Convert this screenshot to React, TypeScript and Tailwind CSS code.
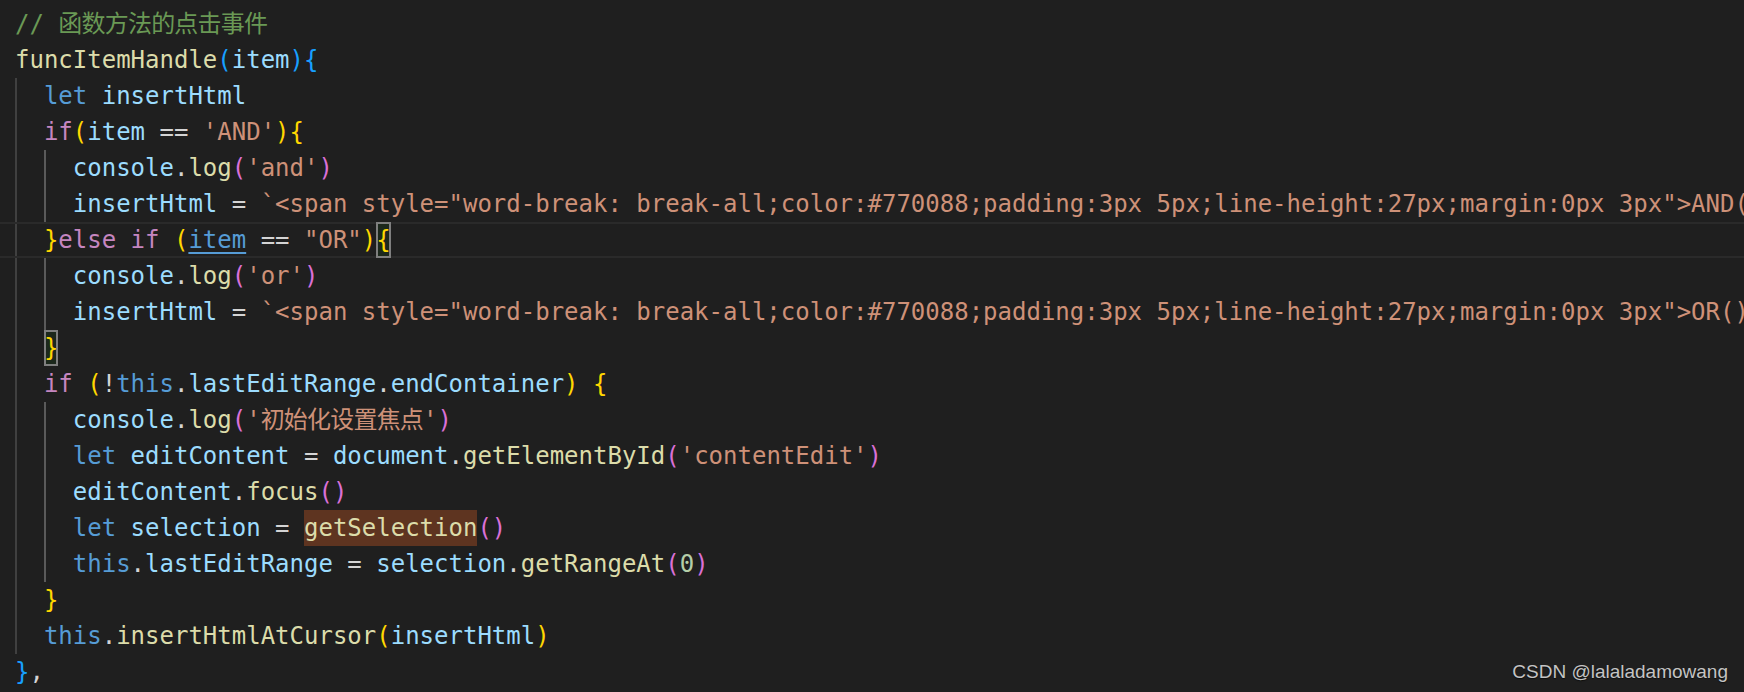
import React from "react";

const C = {
  cm: "text-[#6a9955]",
  fn: "text-[#dcdcaa]",
  vr: "text-[#9cdcfe]",
  kw: "text-[#569cd6]",
  ctl: "text-[#c586c0]",
  st: "text-[#ce9178]",
  op: "text-[#d4d4d4]",
  nm: "text-[#b5cea8]",
  b1: "text-[#ffd700]",
  b2: "text-[#da70d6]",
  b3: "text-[#179fff]",
};

function Guide({ active }: { active?: boolean }) {
  return (
    <span
      className={
        "self-stretch w-[28.9px] shrink-0 border-l-2 " +
        (active ? "border-[#5a5a5a]" : "border-[#404040]")
      }
    />
  );
}

function Line({
  indent,
  children,
  current,
}: {
  indent: number;
  children: React.ReactNode;
  current?: boolean;
}) {
  const guides = [];
  for (let i = 0; i < indent; i++) guides.push(<Guide key={i} active={i === 1} />);
  return (
    <div
      className={
        "flex h-[36px] items-center pl-[15px] whitespace-pre " +
        (current ? "border-y-2 border-[#2a2a2a]" : "")
      }
    >
      {guides}
      <span className="leading-[36px]">{children}</span>
    </div>
  );
}

const S = ({ c, t }: { c: string; t: string }) => <span className={c}>{t}</span>;
const CJK = ({ c, t }: { c: string; t: string }) => (
  <span className={c + " tracking-[-0.8px]"}>{t}</span>
);
const Box = ({ c, t }: { c: string; t: string }) => (
  <span
    className={
      c +
      " inline-block h-[36px] leading-[36px] align-top outline-2 outline-solid outline-[#7f7f7f] -outline-offset-2 bg-[#1c281c]"
    }
  >
    {t}
  </span>
);

export default function App() {
  return (
    <div
      className="relative w-[1744px] h-[692px] overflow-hidden bg-[#1f1f1f] pt-[6px] text-[24px] text-[#d4d4d4]"
      style={{ fontFamily: '"DejaVu Sans Mono", "Noto Sans CJK SC", monospace' }}
    >
      <Line indent={0}>
        <S c={C.cm} t="// " />
        <CJK c={C.cm} t="函数方法的点击事件" />
      </Line>
      <Line indent={0}>
        <S c={C.fn} t="funcItemHandle" />
        <S c={C.b3} t="(" />
        <S c={C.vr} t="item" />
        <S c={C.b3} t="){" />
      </Line>
      <Line indent={1}>
        <S c={C.kw} t="let " />
        <S c={C.vr} t="insertHtml" />
      </Line>
      <Line indent={1}>
        <S c={C.ctl} t="if" />
        <S c={C.b1} t="(" />
        <S c={C.vr} t="item" />
        <S c={C.op} t=" == " />
        <S c={C.st} t="'AND'" />
        <S c={C.b1} t="){" />
      </Line>
      <Line indent={2}>
        <S c={C.vr} t="console" />
        <S c={C.op} t="." />
        <S c={C.fn} t="log" />
        <S c={C.b2} t="(" />
        <S c={C.st} t="'and'" />
        <S c={C.b2} t=")" />
      </Line>
      <Line indent={2}>
        <S c={C.vr} t="insertHtml" />
        <S c={C.op} t=" = " />
        <S
          c={C.st}
          t={'`<span style="word-break: break-all;color:#770088;padding:3px 5px;line-height:27px;margin:0px 3px">AND()</span>`'}
        />
      </Line>
      <Line indent={1} current>
        <S c={C.b1} t="}" />
        <S c={C.ctl} t="else if " />
        <S c={C.b1} t="(" />
        <span className="text-[#569cd6] underline decoration-[#569cd6] decoration-2 underline-offset-[4px]">item</span>
        <S c={C.op} t=" == " />
        <S c={C.st} t={'"OR"'} />
        <S c={C.b1} t=")" />
        <Box c={C.b1} t="{" />
      </Line>
      <Line indent={2}>
        <S c={C.vr} t="console" />
        <S c={C.op} t="." />
        <S c={C.fn} t="log" />
        <S c={C.b2} t="(" />
        <S c={C.st} t="'or'" />
        <S c={C.b2} t=")" />
      </Line>
      <Line indent={2}>
        <S c={C.vr} t="insertHtml" />
        <S c={C.op} t=" = " />
        <S
          c={C.st}
          t={'`<span style="word-break: break-all;color:#770088;padding:3px 5px;line-height:27px;margin:0px 3px">OR()</span>`'}
        />
      </Line>
      <Line indent={1}>
        <Box c={C.b1} t="}" />
      </Line>
      <Line indent={1}>
        <S c={C.ctl} t="if " />
        <S c={C.b1} t="(" />
        <S c={C.op} t="!" />
        <S c={C.kw} t="this" />
        <S c={C.op} t="." />
        <S c={C.vr} t="lastEditRange" />
        <S c={C.op} t="." />
        <S c={C.vr} t="endContainer" />
        <S c={C.b1} t=")" />
        <S c={C.op} t=" " />
        <S c={C.b1} t="{" />
      </Line>
      <Line indent={2}>
        <S c={C.vr} t="console" />
        <S c={C.op} t="." />
        <S c={C.fn} t="log" />
        <S c={C.b2} t="(" />
        <S c={C.st} t="'" />
        <CJK c={C.st} t="初始化设置焦点" />
        <S c={C.st} t="'" />
        <S c={C.b2} t=")" />
      </Line>
      <Line indent={2}>
        <S c={C.kw} t="let " />
        <S c={C.vr} t="editContent" />
        <S c={C.op} t=" = " />
        <S c={C.vr} t="document" />
        <S c={C.op} t="." />
        <S c={C.fn} t="getElementById" />
        <S c={C.b2} t="(" />
        <S c={C.st} t="'contentEdit'" />
        <S c={C.b2} t=")" />
      </Line>
      <Line indent={2}>
        <S c={C.vr} t="editContent" />
        <S c={C.op} t="." />
        <S c={C.fn} t="focus" />
        <S c={C.b2} t="()" />
      </Line>
      <Line indent={2}>
        <S c={C.kw} t="let " />
        <S c={C.vr} t="selection" />
        <S c={C.op} t=" = " />
        <span className="text-[#dcdcaa] inline-block h-[36px] leading-[36px] align-top bg-[#5e3420]">getSelection</span>
        <S c={C.b2} t="()" />
      </Line>
      <Line indent={2}>
        <S c={C.kw} t="this" />
        <S c={C.op} t="." />
        <S c={C.vr} t="lastEditRange" />
        <S c={C.op} t=" = " />
        <S c={C.vr} t="selection" />
        <S c={C.op} t="." />
        <S c={C.fn} t="getRangeAt" />
        <S c={C.b2} t="(" />
        <S c={C.nm} t="0" />
        <S c={C.b2} t=")" />
      </Line>
      <Line indent={1}>
        <S c={C.b1} t="}" />
      </Line>
      <Line indent={1}>
        <S c={C.kw} t="this" />
        <S c={C.op} t="." />
        <S c={C.fn} t="insertHtmlAtCursor" />
        <S c={C.b1} t="(" />
        <S c={C.vr} t="insertHtml" />
        <S c={C.b1} t=")" />
      </Line>
      <Line indent={0}>
        <S c={C.b3} t="}" />
        <S c={C.op} t="," />
      </Line>

      <div
        className="absolute right-[16px] bottom-[9px] text-[19px] leading-[22px] text-[#c4c4c4] [text-shadow:0_1px_1px_rgba(0,0,0,0.6)]"
        style={{ fontFamily: '"Liberation Sans", Arial, sans-serif' }}
      >
        CSDN @lalaladamowang
      </div>
    </div>
  );
}
